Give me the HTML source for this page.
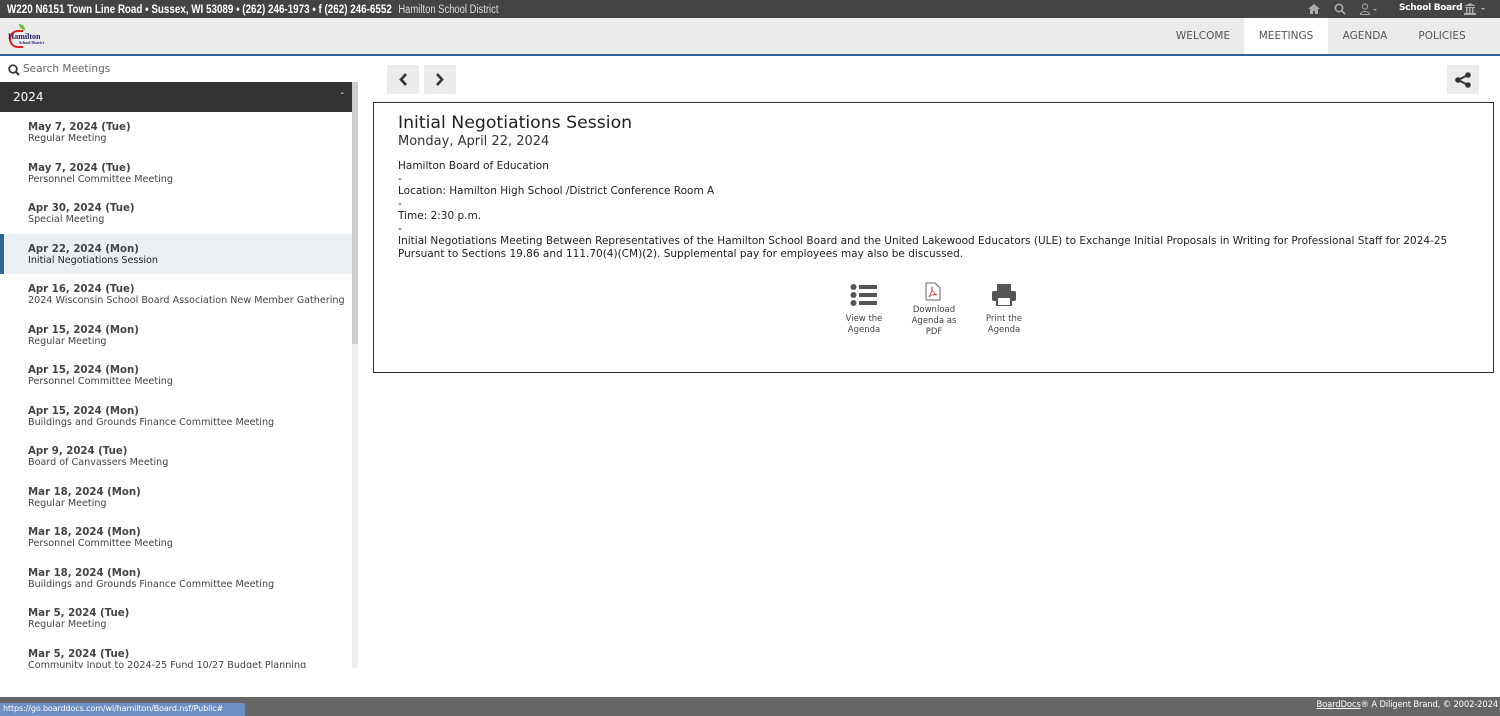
<!DOCTYPE html>
<html><head><meta charset="utf-8"><style>
*{margin:0;padding:0;box-sizing:border-box}
body{width:1500px;height:716px;overflow:hidden;background:#fff;font-family:"DejaVu Sans",Verdana,sans-serif;color:#333;position:relative}
.top{position:absolute;left:0;top:0;width:1500px;height:18px;background:#444;color:#fff}
.top .a{position:absolute;left:7px;top:2px;font:12px "Liberation Sans",sans-serif;transform:scaleX(0.82);transform-origin:0 0;white-space:nowrap}
.top .a span{font-size:11.5px;margin-left:8px;color:#ddd}
.nav{position:absolute;top:18px;left:0;width:1500px;height:38px;background:#ebebeb;border-bottom:2px solid #2f6496}
.nav .t{position:absolute;top:0;height:36px;line-height:37px;font-size:10.5px;color:#555;text-align:center}
.side{position:absolute;left:0;top:58px;width:358px;height:610px;overflow:hidden}
.search{height:24px;font-size:10.5px;color:#666;padding:5px 0 0 23px;position:relative}
.yr{height:30px;background:#333;color:#fff;font-size:12px;padding:8px 13px;width:352px;position:relative}
.sb{position:absolute;left:352px;top:24px;width:6px;height:586px;background:#eee}
.sb i{position:absolute;left:0;top:0;width:6px;height:262px;background:#ccc}
.it{width:352px;height:40.5px;padding:10px 0 0 28px;font-size:9.6px;line-height:11px;color:#444;white-space:nowrap}
.it b{display:block;font-size:10.2px;color:#444}
.it.on{background:#eaeff4;border-left:4px solid #2f6496;padding-left:24px;color:#222}
.btn{position:absolute;width:32px;height:29px;background:#ebebeb;border-radius:2px}
.card{position:absolute;left:373px;top:102px;width:1121px;height:271px;border:1px solid #333}
.foot{position:absolute;left:0;top:697px;width:1500px;height:19px;background:#666}
</style></head><body>
<div class="top"><div class="a"><b>W220 N6151 Town Line Road • Sussex, WI 53089 • (262) 246-1973 • f (262) 246-6552</b><span>Hamilton School District</span></div>
<svg style="position:absolute;left:1308px;top:4px" width="12" height="10" viewBox="0 0 12 10"><path d="M6 0L0 5h2v5h3V7h2v3h3V5h2z" fill="#aaa"/></svg>
<svg style="position:absolute;left:1334px;top:3px" width="12" height="12" viewBox="0 0 12 12"><circle cx="5" cy="5" r="3.7" fill="none" stroke="#aaa" stroke-width="1.6"/><path d="M8 8l3 3" stroke="#aaa" stroke-width="1.8"/></svg>
<svg style="position:absolute;left:1360px;top:3px" width="22" height="12" viewBox="0 0 22 12"><circle cx="5" cy="3.5" r="2.6" fill="none" stroke="#aaa"/><path d="M0.5 11.5c0-4 9-4 9 0z" fill="none" stroke="#aaa"/><path d="M13 6h4l-2 2z" fill="#aaa"/></svg>
<div style="position:absolute;left:1399px;top:3px;font:bold 9px 'DejaVu Sans',sans-serif;color:#fff;letter-spacing:-0.3px">School Board</div>
<svg style="position:absolute;left:1464px;top:3px" width="24" height="12" viewBox="0 0 24 12"><path d="M6 0l6 3H0z M1 4h10v1H1z M2 5h1.5v5H2z M5 5h1.5v5H5z M8 5h1.5v5H8z M0 10h12v2H0z" fill="#aaa"/><path d="M17 5h4l-2 2z" fill="#aaa"/></svg>
</div>
<div class="nav">
<div style="position:absolute;left:7px;top:6px;width:54px;height:26px">
<div style="position:absolute;left:2px;top:6px;width:14px;height:18px;border:2px solid #d22;border-right:none;border-radius:9px 0 0 9px"></div>
<div style="position:absolute;left:12px;top:0;width:6px;height:6px;background:#7b3;border-radius:0 6px"></div>
<div style="position:absolute;left:1px;top:8px;font:bold 8px 'Liberation Serif',serif;color:#226">Hamilton</div>
<div style="position:absolute;left:12px;top:16px;font:bold 4px 'Liberation Serif',serif;color:#226">School District</div>
</div>
<div class="t" style="left:1162px;width:82px">WELCOME</div>
<div class="t" style="left:1244px;width:84px;background:#fff">MEETINGS</div>
<div class="t" style="left:1328px;width:74px">AGENDA</div>
<div class="t" style="left:1402px;width:80px">POLICIES</div>
</div>
<div class="side">
<div class="search"><svg style="position:absolute;left:8px;top:6px" width="12" height="12" viewBox="0 0 12 12"><circle cx="5" cy="5" r="3.8" fill="none" stroke="#333" stroke-width="1.7"/><path d="M8 8l3 3" stroke="#333" stroke-width="2"/></svg>Search Meetings</div>
<div class="yr">2024<span style="position:absolute;right:8px;top:6px;font-size:10px">-</span></div>
<div class="sb"><i></i></div>
<div>
<div class="it"><b>May 7, 2024 (Tue)</b>Regular Meeting</div>
<div class="it"><b>May 7, 2024 (Tue)</b>Personnel Committee Meeting</div>
<div class="it"><b>Apr 30, 2024 (Tue)</b>Special Meeting</div>
<div class="it on"><b>Apr 22, 2024 (Mon)</b>Initial Negotiations Session</div>
<div class="it"><b>Apr 16, 2024 (Tue)</b>2024 Wisconsin School Board Association New Member Gathering</div>
<div class="it"><b>Apr 15, 2024 (Mon)</b>Regular Meeting</div>
<div class="it"><b>Apr 15, 2024 (Mon)</b>Personnel Committee Meeting</div>
<div class="it"><b>Apr 15, 2024 (Mon)</b>Buildings and Grounds Finance Committee Meeting</div>
<div class="it"><b>Apr 9, 2024 (Tue)</b>Board of Canvassers Meeting</div>
<div class="it"><b>Mar 18, 2024 (Mon)</b>Regular Meeting</div>
<div class="it"><b>Mar 18, 2024 (Mon)</b>Personnel Committee Meeting</div>
<div class="it"><b>Mar 18, 2024 (Mon)</b>Buildings and Grounds Finance Committee Meeting</div>
<div class="it"><b>Mar 5, 2024 (Tue)</b>Regular Meeting</div>
<div class="it"><b>Mar 5, 2024 (Tue)</b>Community Input to 2024-25 Fund 10/27 Budget Planning</div>
</div>
</div>
<div class="btn" style="left:387px;top:65px"><svg width="32" height="29" viewBox="0 0 32 29"><path d="M19 9l-5 5.5 5 5.5" fill="none" stroke="#333" stroke-width="2.6"/></svg></div>
<div class="btn" style="left:424px;top:65px"><svg width="32" height="29" viewBox="0 0 32 29"><path d="M13 9l5 5.5-5 5.5" fill="none" stroke="#333" stroke-width="2.6"/></svg></div>
<div class="btn" style="left:1447px;top:65px"><svg width="32" height="29" viewBox="0 0 32 29"><circle cx="21" cy="10" r="2.8" fill="#333"/><circle cx="11" cy="15" r="2.8" fill="#333"/><circle cx="21" cy="20" r="2.8" fill="#333"/><path d="M21 10L11 15 21 20" stroke="#333" stroke-width="2" fill="none"/></svg></div>
<div class="card">
<div style="position:absolute;left:24px;top:10px;font-size:17.3px;color:#222">Initial Negotiations Session</div>
<div style="position:absolute;left:24px;top:31px;font-size:13px;color:#333">Monday, April 22, 2024</div>
<div style="position:absolute;left:24px;top:57px;font-size:10.5px;line-height:12.5px;color:#222;width:1090px">Hamilton Board of Education<br>-<br>Location: Hamilton High School /District Conference Room A<br>-<br>Time: 2:30 p.m.<br>-<br>Initial Negotiations Meeting Between Representatives of the Hamilton School Board and the United Lakewood Educators (ULE) to Exchange Initial Proposals in Writing for Professional Staff for 2024-25 Pursuant to Sections 19.86 and 111.70(4)(CM)(2). Supplemental pay for employees may also be discussed.</div>
<svg style="position:absolute;left:476px;top:181px" width="28" height="22" viewBox="0 0 28 22"><circle cx="3.5" cy="3" r="3" fill="#555"/><circle cx="3.5" cy="11" r="3" fill="#555"/><circle cx="3.5" cy="19" r="3" fill="#555"/><rect x="9" y="1" width="18" height="4" fill="#555"/><rect x="9" y="9" width="18" height="4" fill="#555"/><rect x="9" y="17" width="18" height="4" fill="#555"/></svg>
<div style="position:absolute;left:460px;top:211px;width:60px;text-align:center;font-size:8.5px;line-height:11px;color:#444">View the Agenda</div>
<svg style="position:absolute;left:551px;top:179px" width="16" height="19" viewBox="0 0 16 19"><path d="M1 1h9l5 5v12H1z" fill="none" stroke="#666"/><path d="M4 15c2-4 4-8 3-10-1 2 1 6 5 8-4-1-6 0-8 2z" fill="none" stroke="#c44" stroke-width=".8"/></svg>
<div style="position:absolute;left:530px;top:202px;width:60px;text-align:center;font-size:8.5px;line-height:11px;color:#444">Download Agenda as PDF</div>
<svg style="position:absolute;left:617px;top:181px" width="26" height="22" viewBox="0 0 26 22"><rect x="6" y="0" width="14" height="7" fill="#555"/><rect x="1" y="7" width="24" height="10" rx="2" fill="#555"/><rect x="6" y="13" width="14" height="9" fill="#fff" stroke="#555" stroke-width="2"/></svg>
<div style="position:absolute;left:600px;top:211px;width:60px;text-align:center;font-size:8.5px;line-height:11px;color:#444">Print the Agenda</div>
</div>
<div class="foot"><div style="position:absolute;right:2px;top:3px;font-size:8.5px;color:#fff;letter-spacing:-0.2px"><u>BoardDocs</u>® A Diligent Brand, © 2002-2024</div>
<div style="position:absolute;left:0;top:6px;height:13px;width:245px;background:#6e8fc4;border-radius:0 3px 0 0;font-size:8px;color:#fff;padding:1px 3px;font-family:'DejaVu Sans',sans-serif;white-space:nowrap;overflow:hidden;letter-spacing:-0.1px">https://go.boarddocs.com/wi/hamilton/Board.nsf/Public#</div></div>
</body></html>
